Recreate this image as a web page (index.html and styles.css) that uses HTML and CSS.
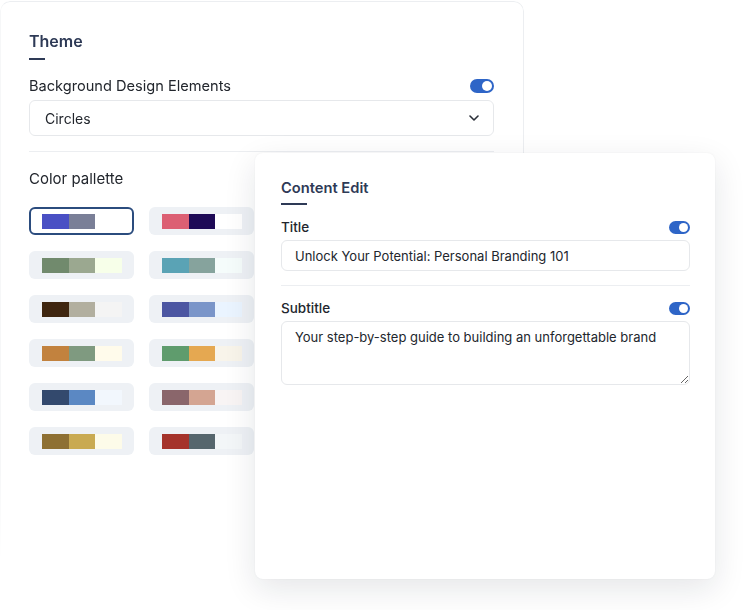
FILE: index.html
```html
<!DOCTYPE html>
<html lang="en">
<head>
<meta charset="utf-8">
<title>Theme editor</title>
<link rel="stylesheet" href="styles.css">
</head>
<body>
<div class="page">
  <section class="theme-card">
    <h2 class="heading">Theme</h2>
    <div class="heading-bar"></div>
    <div class="row row-bg">
      <span class="label">Background Design Elements</span>
      <span class="toggle"><span class="knob"></span></span>
    </div>
    <div class="select">
      <span>Circles</span>
      <svg class="chevron" width="10" height="6" viewBox="0 0 10 6"><path d="M1 1l4 4 4-4" fill="none" stroke="#2a2f38" stroke-width="1.6" stroke-linecap="round" stroke-linejoin="round"/></svg>
    </div>
    <div class="divider"></div>
    <div class="label palette-label">Color pallette</div>
    <div class="swatches">
      <div class="swatch selected"><i style="background:#4a50c4"></i><i style="background:#7a7f97"></i><i style="background:#ffffff"></i></div>
      <div class="swatch"><i style="background:#dc5f73"></i><i style="background:#1e0a56"></i><i style="background:#ffffff"></i></div>
      <div class="swatch"><i style="background:#718a6d"></i><i style="background:#9ba890"></i><i style="background:#f7ffe9"></i></div>
      <div class="swatch"><i style="background:#5aa3b5"></i><i style="background:#86a39d"></i><i style="background:#f5fcfb"></i></div>
      <div class="swatch"><i style="background:#3f2610"></i><i style="background:#b2af9f"></i><i style="background:#f4f4f4"></i></div>
      <div class="swatch"><i style="background:#4c56a2"></i><i style="background:#7a95c9"></i><i style="background:#eaf4ff"></i></div>
      <div class="swatch"><i style="background:#c2823e"></i><i style="background:#7f9a80"></i><i style="background:#fffbeb"></i></div>
      <div class="swatch"><i style="background:#5f9c6d"></i><i style="background:#e5a851"></i><i style="background:#f8f4ea"></i></div>
      <div class="swatch"><i style="background:#33496d"></i><i style="background:#5b88c3"></i><i style="background:#f2f7fd"></i></div>
      <div class="swatch"><i style="background:#8a666b"></i><i style="background:#d4a592"></i><i style="background:#f8f4f4"></i></div>
      <div class="swatch"><i style="background:#8e7033"></i><i style="background:#c9aa52"></i><i style="background:#fdfbe9"></i></div>
      <div class="swatch"><i style="background:#a5332b"></i><i style="background:#56666d"></i><i style="background:#f3f6f8"></i></div>
    </div>
  </section>

  <section class="content-card">
    <h2 class="heading small">Content Edit</h2>
    <div class="heading-bar wide"></div>
    <div class="row row-field">
      <span class="label sm">Title</span>
      <span class="toggle sm"><span class="knob"></span></span>
    </div>
    <div class="input">Unlock Your Potential: Personal Branding 101</div>
    <div class="divider d2"></div>
    <div class="row row-field">
      <span class="label sm">Subtitle</span>
      <span class="toggle sm"><span class="knob"></span></span>
    </div>
    <textarea class="textarea" readonly>Your step-by-step guide to building an unforgettable brand</textarea>
  </section>
</div>
</body>
</html>
```

FILE: styles.css
```css
* { box-sizing: border-box; }
html, body { margin: 0; padding: 0; background: #ffffff; }
body {
  width: 746px;
  height: 610px;
  overflow: hidden;
  font-family: Inter, "Noto Sans", "Liberation Sans", sans-serif;
  color: #22262d;
}
.page { position: relative; width: 746px; height: 610px; overflow: hidden; }

.theme-card {
  margin-top: 1px;
  width: 524px;
  height: 600px;
  border: 1px solid #eceef1;
  border-left-color: #f6f7f8;
  border-radius: 10px;
  padding: 29px 29px 0 28px;
  -webkit-mask-image: linear-gradient(to bottom, #000 0, #000 470px, transparent 560px);
  mask-image: linear-gradient(to bottom, #000 0, #000 470px, transparent 560px);
}
.heading {
  margin: 0;
  font-size: 16px;
  line-height: 20px;
  font-weight: 600;
  color: #2e3a56;
}
.heading.small { font-size: 14.7px; }
.heading-bar {
  margin-top: 7px;
  width: 16px;
  height: 2px;
  background: #2e3a56;
}
.heading-bar.wide { width: 26px; margin-top: 5px; }

.row {
  display: flex;
  align-items: center;
  justify-content: space-between;
}
.row-bg { margin-top: 16px; height: 20px; }
.label {
  font-size: 14.6px;
  line-height: 20px;
  font-weight: 400;
  color: #22262d;
}
.palette-label { font-size: 15px; }
.label.sm { font-size: 13.5px; font-weight: 500; }

.toggle {
  position: relative;
  width: 24px;
  height: 14px;
  border-radius: 7px;
  background: #2e65c7;
}
.toggle .knob {
  position: absolute;
  right: 2px;
  top: 2px;
  width: 10px;
  height: 10px;
  border-radius: 50%;
  background: #ffffff;
}
.toggle.sm { width: 21px; height: 13px; border-radius: 6.5px; }
.toggle.sm .knob { width: 9px; height: 9px; }

.select {
  margin-top: 4px;
  height: 36px;
  border: 1px solid #e6e8eb;
  border-radius: 6px;
  display: flex;
  align-items: center;
  justify-content: space-between;
  padding: 0 14px 0 15px;
  font-size: 14px;
  color: #22262d;
}
.chevron { display: block; }

.divider { margin-top: 15px; height: 1px; background: #eceef1; }
.palette-label { margin-top: 17px; }

.swatches {
  margin-top: 18px;
  display: grid;
  grid-template-columns: 105px 105px;
  column-gap: 15px;
  row-gap: 16px;
}
.swatch {
  height: 28px;
  border: 2px solid transparent;
  border-radius: 6px;
  background: #eef1f5;
  padding: 5px 10px 0 11px;
  display: flex;
}
.swatch i { display: block; flex: 1; height: 15px; }
.swatch.selected { background: #ffffff; border-color: #2b4c7e; }

.content-card {
  position: absolute;
  left: 255px;
  top: 153px;
  width: 460px;
  height: 426px;
  background: #ffffff;
  border-radius: 8px;
  padding: 25px 25px 0 26px;
  box-shadow: 0 10px 32px rgba(20, 30, 50, 0.11), 0 0 2px rgba(20, 30, 50, 0.06);
}
.row-field { margin-top: 12px; height: 20px; }
.input {
  margin-top: 3px;
  height: 31px;
  border: 1px solid #e6e8eb;
  border-radius: 6px;
  padding: 0 13px;
  display: flex;
  align-items: center;
  font-size: 13px;
  color: #22262d;
}
.divider.d2 { margin-top: 14px; }
.textarea {
  display: block;
  margin: 3px 0 0 0;
  width: 100%;
  height: 64px;
  border: 1px solid #e6e8eb;
  border-radius: 6px;
  padding: 5px 13px;
  font-family: Inter, "Noto Sans", "Liberation Sans", sans-serif;
  font-size: 13px;
  line-height: 20px;
  color: #22262d;
  resize: vertical;
  outline: none;
  background: #ffffff;
}
```
